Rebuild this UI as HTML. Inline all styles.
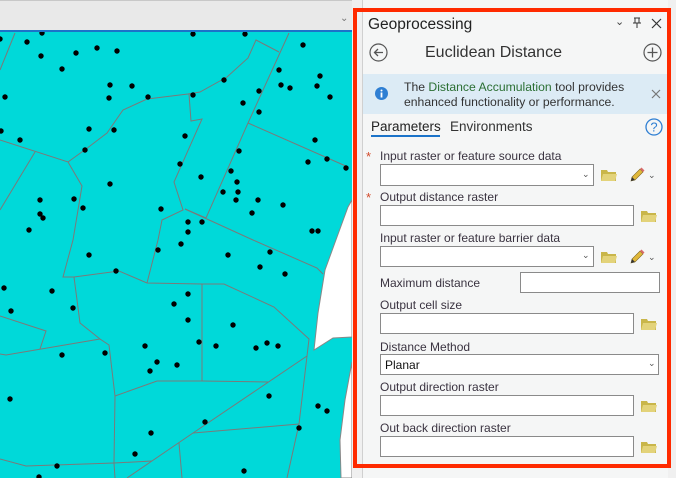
<!DOCTYPE html>
<html><head><style>
*{margin:0;padding:0;box-sizing:border-box}
body{width:676px;height:478px;overflow:hidden;background:#f0f0f0;font-family:"Segoe UI","Liberation Sans",sans-serif;position:relative}
.a{position:absolute}
.t{position:absolute;font-size:12px;color:#3a3340;white-space:nowrap;line-height:14px}
.box{position:absolute;background:#fff;border:1px solid #8a8a8a}
.chev{position:absolute;font-size:9px;color:#555}
</style></head><body>
<div class="a" style="left:0;top:0;width:352px;height:31px;background:#e9e9e9;border-top:1px solid #c8c8c8"></div>
<div class="t" style="left:340px;top:12px;font-size:10px;color:#777">⌄</div>
<div class="a" style="left:0;top:30px;width:352px;height:2px;background:#1b73c9"></div>
<svg class="a" style="left:0;top:32px" width="352" height="446" viewBox="0 32 352 446">
<rect x="0" y="32" width="352" height="446" fill="#00d9d9"/>
<path d="M352,200 L348,207 L337,237 L325,270 L318,313 L314,350 L333,338 L352,337 Z M352,362 L345,400 L340,440 L341,478 L352,478 Z" fill="#fff" stroke="#888" stroke-width="1"/>
<g fill="none" stroke="#7a7a7a" stroke-width="1">
<path d="M15,33 L0,70"/>
<path d="M0,140 L68,162 L86,149 L107,133 L123,110 L147,99 L188,94 L200,92 L227,77 L248,58 L256,40 L279,52"/>
<path d="M68,162 L82,186 L73,240 L63,277 L74,277 L119,271 L147,283 L202,284 L224,284 L274,307 L309,339 L307,356 L299,424 L287,478"/>
<path d="M189,94 L191,121 L202,119 L174,182 L183,210 L162,220 L158,240 L147,283"/>
<path d="M289,33 L248,123 L206,218 L185,209"/>
<path d="M185,209 L253,240 L317,268 L323,274"/>
<path d="M248,123 L348,167"/>
<path d="M35,152 L0,210"/>
<path d="M202,284 L202,381"/>
<path d="M115,396 L157,381 L202,381 L268,382"/>
<path d="M74,277 L80,323 L100,339 L109,345 L115,396 L114,463 L115,478"/>
<path d="M0,316 L46,331 L40,349"/>
<path d="M0,354 L6,355 L100,339"/>
<path d="M307,356 L193,433 L127,478"/>
<path d="M193,433 L299,424"/>
<path d="M179,443 L182,478"/>
<path d="M0,459 L26,466 L114,463 L152,461"/>
</g>
<g fill="#000">
<circle cx="0" cy="39" r="2.7"/><circle cx="27" cy="42" r="2.7"/><circle cx="42" cy="33" r="2.7"/><circle cx="41" cy="56" r="2.7"/><circle cx="62" cy="69" r="2.7"/><circle cx="76" cy="53" r="2.7"/><circle cx="97" cy="48" r="2.7"/><circle cx="117" cy="51" r="2.7"/><circle cx="5" cy="97" r="2.7"/><circle cx="110" cy="85" r="2.7"/><circle cx="109" cy="98" r="2.7"/><circle cx="132" cy="86" r="2.7"/><circle cx="148" cy="97" r="2.7"/><circle cx="193" cy="34" r="2.7"/><circle cx="245" cy="34" r="2.7"/><circle cx="224" cy="80" r="2.7"/><circle cx="193" cy="95" r="2.7"/><circle cx="1" cy="131" r="2.7"/><circle cx="20" cy="140" r="2.7"/><circle cx="89" cy="129" r="2.7"/><circle cx="114" cy="130" r="2.7"/><circle cx="85" cy="150" r="2.7"/><circle cx="185" cy="136" r="2.7"/><circle cx="180" cy="164" r="2.7"/><circle cx="110" cy="184" r="2.7"/><circle cx="243" cy="103" r="2.7"/><circle cx="259" cy="91" r="2.7"/><circle cx="279" cy="70" r="2.7"/><circle cx="281" cy="85" r="2.7"/><circle cx="290" cy="88" r="2.7"/><circle cx="303" cy="45" r="2.7"/><circle cx="320" cy="76" r="2.7"/><circle cx="317" cy="86" r="2.7"/><circle cx="330" cy="97" r="2.7"/><circle cx="259" cy="112" r="2.7"/><circle cx="239" cy="151" r="2.7"/><circle cx="315" cy="140" r="2.7"/><circle cx="327" cy="159" r="2.7"/><circle cx="308" cy="162" r="2.7"/><circle cx="346" cy="168" r="2.7"/><circle cx="201" cy="177" r="2.7"/><circle cx="231" cy="171" r="2.7"/><circle cx="237" cy="182" r="2.7"/><circle cx="238" cy="192" r="2.7"/><circle cx="223" cy="192" r="2.7"/><circle cx="236" cy="200" r="2.7"/><circle cx="258" cy="200" r="2.7"/><circle cx="283" cy="205" r="2.7"/><circle cx="252" cy="213" r="2.7"/><circle cx="40" cy="200" r="2.7"/><circle cx="40" cy="214" r="2.7"/><circle cx="43" cy="218" r="2.7"/><circle cx="74" cy="199" r="2.7"/><circle cx="83" cy="208" r="2.7"/><circle cx="29" cy="230" r="2.7"/><circle cx="161" cy="209" r="2.7"/><circle cx="188" cy="222" r="2.7"/><circle cx="202" cy="222" r="2.7"/><circle cx="312" cy="231" r="2.7"/><circle cx="318" cy="231" r="2.7"/><circle cx="188" cy="232" r="2.7"/>
<circle cx="89" cy="255" r="2.7"/><circle cx="116" cy="271" r="2.7"/><circle cx="4" cy="288" r="2.7"/><circle cx="52" cy="291" r="2.7"/><circle cx="73" cy="308" r="2.7"/><circle cx="11" cy="311" r="2.7"/><circle cx="62" cy="355" r="2.7"/><circle cx="105" cy="353" r="2.7"/><circle cx="158" cy="250" r="2.7"/><circle cx="181" cy="244" r="2.7"/><circle cx="228" cy="255" r="2.7"/><circle cx="270" cy="252" r="2.7"/><circle cx="260" cy="267" r="2.7"/><circle cx="285" cy="274" r="2.7"/><circle cx="188" cy="294" r="2.7"/><circle cx="174" cy="304" r="2.7"/><circle cx="188" cy="320" r="2.7"/><circle cx="199" cy="342" r="2.7"/><circle cx="145" cy="346" r="2.7"/><circle cx="157" cy="362" r="2.7"/><circle cx="150" cy="371" r="2.7"/><circle cx="177" cy="365" r="2.7"/><circle cx="216" cy="346" r="2.7"/><circle cx="233" cy="325" r="2.7"/><circle cx="256" cy="348" r="2.7"/><circle cx="267" cy="343" r="2.7"/><circle cx="278" cy="346" r="2.7"/><circle cx="269" cy="396" r="2.7"/><circle cx="318" cy="406" r="2.7"/><circle cx="327" cy="411" r="2.7"/><circle cx="299" cy="428" r="2.7"/><circle cx="10" cy="399" r="2.7"/><circle cx="205" cy="422" r="2.7"/><circle cx="151" cy="433" r="2.7"/><circle cx="135" cy="454" r="2.7"/><circle cx="57" cy="466" r="2.7"/><circle cx="39" cy="477" r="2.7"/><circle cx="244" cy="471" r="2.7"/>
</g>
</svg>
<div class="a" style="left:352px;top:0;width:324px;height:478px;background:#f0f0f0"></div>
<div class="a" style="left:362px;top:0;width:306px;height:478px;background:#f5f6f6;border-left:1px solid #d0d0d0"></div>
<div class="a" style="left:353px;top:8px;width:318px;height:460px;border:4px solid #ff2a00"></div>
<div class="t" style="left:368px;top:15px;font-size:15.5px;line-height:19px;color:#222">Geoprocessing</div>
<div class="t" style="left:615px;top:15px;font-size:11px;color:#444">⌄</div>
<svg class="a" style="left:632px;top:17px" width="10" height="12"><path d="M2,1 H8 M3,1 V6 M7,1 V6 M1,6 H9 M5,6 V11" stroke="#333" fill="none"/></svg>
<svg class="a" style="left:651px;top:18px" width="11" height="11"><path d="M1,1 L10,10 M10,1 L1,10" stroke="#333" stroke-width="1.2"/></svg>
<svg class="a" style="left:369px;top:43px" width="19" height="19"><circle cx="9.5" cy="9.5" r="8.5" stroke="#555" fill="none" stroke-width="1.2"/><path d="M14,9.5 H5.5 M9,6 L5.5,9.5 L9,13" stroke="#555" fill="none" stroke-width="1.3"/></svg>
<div class="t" style="left:425px;top:43px;font-size:16px;line-height:19px;color:#333">Euclidean Distance</div>
<svg class="a" style="left:643px;top:43px" width="19" height="19"><circle cx="9.5" cy="9.5" r="8.5" stroke="#555" fill="none" stroke-width="1.2"/><path d="M9.5,4.5 V14.5 M4.5,9.5 H14.5" stroke="#555" stroke-width="1.3"/></svg>
<div class="a" style="left:363px;top:74px;width:304px;height:40px;background:#dcebf5"></div>
<svg class="a" style="left:375px;top:87px" width="13" height="13"><circle cx="6.5" cy="6.5" r="6.5" fill="#2f7fd3"/><rect x="5.6" y="5.5" width="1.8" height="5" fill="#fff"/><circle cx="6.5" cy="3.5" r="1" fill="#fff"/></svg>
<div class="t" style="left:404px;top:80px;font-size:12.2px;line-height:14.5px;color:#333">The <span style="color:#2b6f33">Distance Accumulation</span> tool provides<br>enhanced functionality or performance.</div>
<svg class="a" style="left:651px;top:89px" width="10" height="10"><path d="M1,1 L9,9 M9,1 L1,9" stroke="#777" stroke-width="1.2"/></svg>
<div class="t" style="left:371px;top:119px;font-size:13.5px;line-height:16px;color:#222">Parameters</div>
<div class="a" style="left:371px;top:135px;width:69px;height:2px;background:#1b73c9"></div>
<div class="t" style="left:450px;top:119px;font-size:13.5px;line-height:16px;color:#333">Environments</div>
<svg class="a" style="left:645px;top:118px" width="18" height="18"><circle cx="9" cy="9" r="8" stroke="#2f7fd3" fill="none" stroke-width="1.3"/><text x="9" y="13.5" text-anchor="middle" font-size="13" font-family="Liberation Sans" fill="#2f7fd3">?</text></svg>

<div class="t" style="left:366px;top:150px;color:#d24a2a;font-size:13px">*</div>
<div class="t" style="left:380px;top:149px">Input raster or feature source data</div>
<div class="box" style="left:380px;top:164px;width:214px;height:22px"></div><div class="chev" style="left:582px;top:169px">⌄</div>
<div class="t" style="left:366px;top:191px;color:#d24a2a;font-size:13px">*</div>
<div class="t" style="left:380px;top:190px">Output distance raster</div>
<div class="box" style="left:380px;top:205px;width:254px;height:21px"></div>
<div class="t" style="left:380px;top:231px">Input raster or feature barrier data</div>
<div class="box" style="left:380px;top:246px;width:214px;height:21px"></div><div class="chev" style="left:582px;top:250px">⌄</div>
<div class="t" style="left:380px;top:276px">Maximum distance</div>
<div class="box" style="left:520px;top:272px;width:140px;height:21px"></div>
<div class="t" style="left:380px;top:298px">Output cell size</div>
<div class="box" style="left:380px;top:313px;width:254px;height:21px"></div>
<div class="t" style="left:380px;top:340px">Distance Method</div>
<div class="box" style="left:380px;top:354px;width:279px;height:21px"></div>
<div class="t" style="left:385px;top:358px;color:#111">Planar</div><div class="chev" style="left:648px;top:358px">⌄</div>
<div class="t" style="left:380px;top:380px">Output direction raster</div>
<div class="box" style="left:380px;top:395px;width:254px;height:21px"></div>
<div class="t" style="left:380px;top:421px">Out back direction raster</div>
<div class="box" style="left:380px;top:436px;width:254px;height:21px"></div>

<svg width="0" height="0" style="position:absolute"><defs><g id="f"><path d="M0,2 H6 L7,4 H15 V13 H0 Z" fill="#c9b64a"/><path d="M2,6 H16 L14,13 H0 Z" fill="#e3d37a"/></g><g id="p"><path d="M2,14 L3,10 L11,2 L14,5 L6,13 Z" fill="#e0b83a" stroke="#7a6220" stroke-width="0.6"/><path d="M11,2 L12.5,0.5 L15.5,3.5 L14,5 Z" fill="#d86a6a"/><path d="M2,14 L3,10 L6,13 Z" fill="#333"/></g></defs></svg>
<svg class="a" style="left:601px;top:168px" width="17" height="14"><use href="#f"/></svg>
<svg class="a" style="left:629px;top:167px" width="16" height="15"><use href="#p"/></svg><div class="chev" style="left:648px;top:170px">⌄</div>
<svg class="a" style="left:641px;top:209px" width="17" height="14"><use href="#f"/></svg>
<svg class="a" style="left:601px;top:250px" width="17" height="14"><use href="#f"/></svg>
<svg class="a" style="left:629px;top:249px" width="16" height="15"><use href="#p"/></svg><div class="chev" style="left:648px;top:252px">⌄</div>
<svg class="a" style="left:641px;top:317px" width="17" height="14"><use href="#f"/></svg>
<svg class="a" style="left:641px;top:399px" width="17" height="14"><use href="#f"/></svg>
<svg class="a" style="left:641px;top:440px" width="17" height="14"><use href="#f"/></svg>
</body></html>
